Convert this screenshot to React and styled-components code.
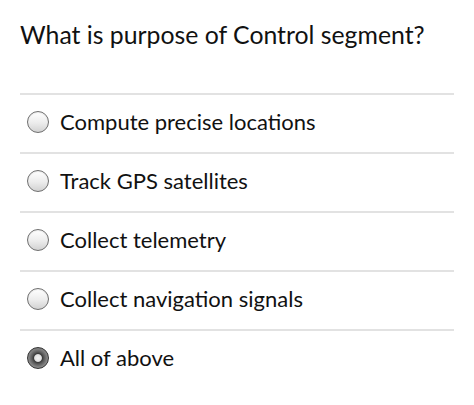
import React from "react";
import styled, { createGlobalStyle } from "styled-components";

const Global = createGlobalStyle`
  html, body { margin: 0; padding: 0; background: #fff; }
  body { font-family: Lato, "Open Sans", sans-serif; color: #1a1a1a; }
`;

const Card = styled.div`
  width: 474px;
  height: 405px;
  box-sizing: border-box;
  padding: 20px 20px 0 20px;
  background: #fff;
`;

const Question = styled.h1`
  margin: 0;
  font-size: 24.8px;
  font-weight: 400;
  line-height: 30px;
  color: #111;
`;

const Options = styled.ul`
  list-style: none;
  margin: 43px 0 0 0;
  padding: 0;
  width: 434px;
`;

const Option = styled.li`
  display: flex;
  align-items: center;
  gap: 11px;
  height: 59px;
  padding: 0 0 4px 7px;
  box-sizing: border-box;
  border-top: 2px solid #e2e2e2;
  font-size: 22px;
  color: #111;
`;

const Radio = styled.span`
  flex: none;
  width: 22px;
  height: 22px;
  border-radius: 50%;
  box-sizing: border-box;
  border: 1.5px solid ${(p) => (p.$checked ? "#333" : "#6f6f6f")};
  background: ${(p) =>
    p.$checked
      ? "radial-gradient(circle at 50% 50%, #f4f4f4 0, #e2e2e2 3.4px, #3a3a3a 4.4px, #5a5a5a 6px, #8a8a8a 9.5px)"
      : "linear-gradient(to bottom, #ffffff 0%, #ececec 55%, #d2d2d2 100%)"};
  box-shadow: inset 0 1px 1px rgba(0, 0, 0, 0.08);
`;

const Label = styled.span`
  line-height: 26px;
`;

const items = [
  "Compute precise locations",
  "Track GPS satellites",
  "Collect telemetry",
  "Collect navigation signals",
  "All of above",
];

export default function App() {
  return (
    <>
      <Global />
      <Card>
        <Question>What is purpose of Control segment?</Question>
        <Options>
          {items.map((t, i) => (
            <Option key={t}>
              <Radio $checked={i === 4} />
              <Label>{t}</Label>
            </Option>
          ))}
        </Options>
      </Card>
    </>
  );
}
